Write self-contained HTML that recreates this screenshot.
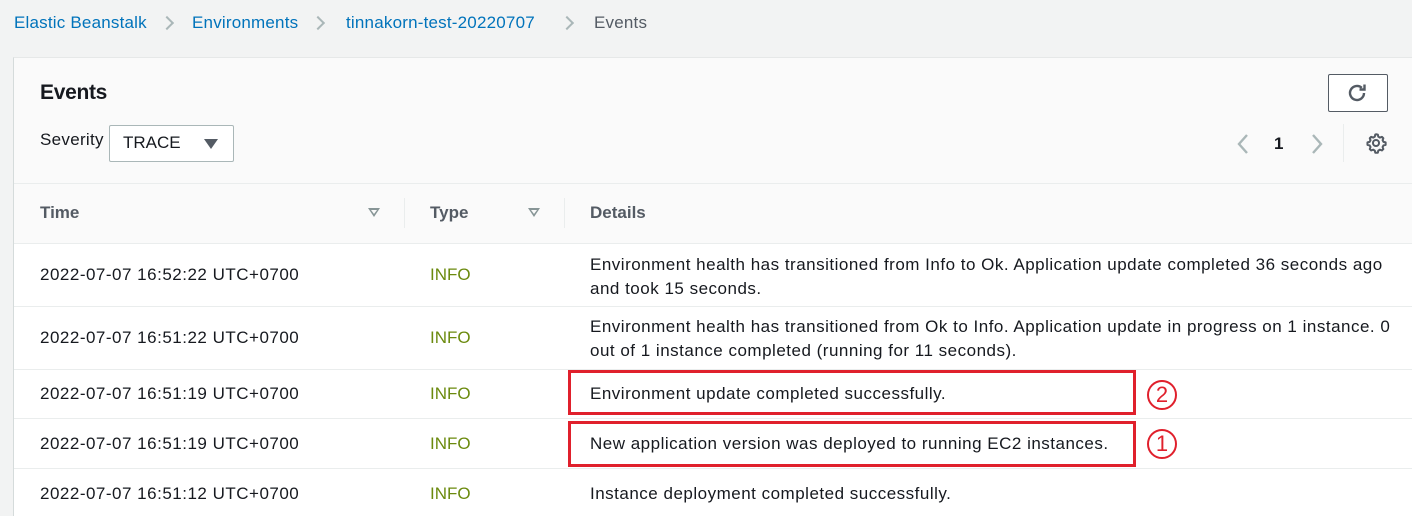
<!DOCTYPE html>
<html><head><meta charset="utf-8"><style>
*{margin:0;padding:0;box-sizing:border-box}
body{width:1412px;height:516px;overflow:hidden;background:#f2f3f3;font-family:"Liberation Sans",sans-serif;color:#16191f;position:relative}
.a{position:absolute;white-space:nowrap}
.bc{top:13px;font-size:17px;color:#0073bb;letter-spacing:0.2px}
.sep{top:12px;width:10px;height:10px;border-right:2px solid #aab7b8;border-top:2px solid #aab7b8;transform:rotate(45deg)}
.card{position:absolute;left:13px;top:57px;right:0;bottom:0;background:#fafafa;border-left:1px solid #d5dbdb;border-top:1px solid #e6e8e8}
.hl{position:absolute;left:14px;right:0;height:1px;background:#eaeded}
.row{position:absolute;left:14px;right:0;background:#fff}
.t{font-size:17px;letter-spacing:0.5px}
.info{color:#6b8a0e;font-size:17px}
.th{font-size:17px;font-weight:bold;color:#545b64;top:203px}
.tri{top:208px;width:0;height:0;border-left:6px solid transparent;border-right:6px solid transparent;border-top:9px solid #879596}
.tri:after{content:"";position:absolute;left:-3px;top:-7px;border-left:3px solid transparent;border-right:3px solid transparent;border-top:4px solid #fafafa}
.red{position:absolute;border:3px solid #e0202c}
.circ{position:absolute;width:30px;height:30px;border:2px solid #e0202c;border-radius:50%;color:#e0202c;font-size:22px;text-align:center;line-height:26px}
</style></head><body>
<div class="a bc" style="left:14px">Elastic Beanstalk</div>
<div class="a sep" style="left:162px;top:18px"></div>
<div class="a bc" style="left:192px">Environments</div>
<div class="a sep" style="left:313px;top:18px"></div>
<div class="a bc" style="left:346px">tinnakorn-test-20220707</div>
<div class="a sep" style="left:562px;top:18px"></div>
<div class="a bc" style="left:594px;color:#545b64">Events</div>

<div class="card"></div>
<div class="a" style="left:40px;top:81px;font-size:21px;font-weight:bold;letter-spacing:-0.3px">Events</div>
<div class="a" style="left:40px;top:130px;font-size:17px;letter-spacing:0.3px">Severity</div>
<div class="a" style="left:109px;top:125px;width:125px;height:37px;border:1px solid #aab7b8;border-radius:2px;background:#fff"></div>
<div class="a" style="left:123px;top:133px;font-size:17px">TRACE</div>
<div class="a" style="left:204px;top:139px;border-left:7px solid transparent;border-right:7px solid transparent;border-top:10px solid #545b64"></div>

<div class="a" style="left:1328px;top:74px;width:60px;height:38px;border:1px solid #545b64;border-radius:2px;background:#fff"></div>
<svg class="a" style="left:1345px;top:81px" width="24" height="24" viewBox="0 0 24 24"><path d="M19 12a7 7 0 1 1-2.2-5.1" fill="none" stroke="#545b64" stroke-width="2.4"/><path d="M19.5 3.5v5h-5" fill="none" stroke="#545b64" stroke-width="2.4"/></svg>

<svg class="a" style="left:1236px;top:133px" width="14" height="22" viewBox="0 0 14 22"><path d="M11 2L3 11l8 9" fill="none" stroke="#aab7b8" stroke-width="2.4"/></svg>
<div class="a" style="left:1274px;top:134px;font-size:17px;font-weight:bold">1</div>
<svg class="a" style="left:1310px;top:133px" width="14" height="22" viewBox="0 0 14 22"><path d="M3 2l8 9-8 9" fill="none" stroke="#aab7b8" stroke-width="2.4"/></svg>
<div class="a" style="left:1343px;top:124px;width:1px;height:38px;background:#eaeded"></div>
<svg class="a" style="left:1365px;top:132px" width="22" height="22" viewBox="0 0 24 24"><path d="M12 2.5l2 .3.5 2.3 1.8 1 2.2-.8 1.5 1.5-.8 2.2 1 1.8 2.3.5v2.8l-2.3.5-1 1.8.8 2.2-1.5 1.5-2.2-.8-1.8 1-.5 2.300h-2.8l-.5-2.3-1.8-1-2.2.8-1.5-1.5.8-2.2-1-1.8-2.3-.5v-2.8l2.3-.5 1-1.8-.8-2.2 1.5-1.5 2.2.8 1.8-1 .5-2.3z" fill="none" stroke="#545b64" stroke-width="2.2" stroke-linejoin="round"/><circle cx="12" cy="12" r="3.3" fill="none" stroke="#545b64" stroke-width="2.2"/></svg>

<div class="hl" style="top:183px"></div>
<div class="a th" style="left:40px">Time</div>
<div class="a tri" style="left:368px"></div>
<div class="a" style="left:404px;top:198px;width:1px;height:30px;background:#eaeded"></div>
<div class="a th" style="left:430px">Type</div>
<div class="a tri" style="left:528px"></div>
<div class="a" style="left:564px;top:198px;width:1px;height:30px;background:#eaeded"></div>
<div class="a th" style="left:590px">Details</div>

<div class="row" style="top:243px;height:273px"></div>
<div class="hl" style="top:243px"></div>
<div class="hl" style="top:306px"></div>
<div class="hl" style="top:369px"></div>
<div class="hl" style="top:418px"></div>
<div class="hl" style="top:468px"></div>

<div class="a t" style="left:40px;top:265px">2022-07-07 16:52:22 UTC+0700</div>
<div class="a info" style="left:430px;top:265px">INFO</div>
<div class="a t" style="left:590px;top:253px;line-height:24px">Environment health has transitioned from Info to Ok. Application update completed 36 seconds ago<br>and took 15 seconds.</div>

<div class="a t" style="left:40px;top:328px">2022-07-07 16:51:22 UTC+0700</div>
<div class="a info" style="left:430px;top:328px">INFO</div>
<div class="a t" style="left:590px;top:315px;line-height:24px">Environment health has transitioned from Ok to Info. Application update in progress on 1 instance. 0<br>out of 1 instance completed (running for 11 seconds).</div>

<div class="a t" style="left:40px;top:384px">2022-07-07 16:51:19 UTC+0700</div>
<div class="a info" style="left:430px;top:384px">INFO</div>
<div class="a t" style="left:590px;top:384px">Environment update completed successfully.</div>

<div class="a t" style="left:40px;top:434px">2022-07-07 16:51:19 UTC+0700</div>
<div class="a info" style="left:430px;top:434px">INFO</div>
<div class="a t" style="left:590px;top:434px">New application version was deployed to running EC2 instances.</div>

<div class="a t" style="left:40px;top:484px">2022-07-07 16:51:12 UTC+0700</div>
<div class="a info" style="left:430px;top:484px">INFO</div>
<div class="a t" style="left:590px;top:484px">Instance deployment completed successfully.</div>

<div class="red" style="left:568px;top:370px;width:568px;height:45px"></div>
<div class="red" style="left:568px;top:421px;width:568px;height:46px"></div>
<div class="circ" style="left:1147px;top:380px">2</div>
<div class="circ" style="left:1147px;top:429px">1</div>
</body></html>
